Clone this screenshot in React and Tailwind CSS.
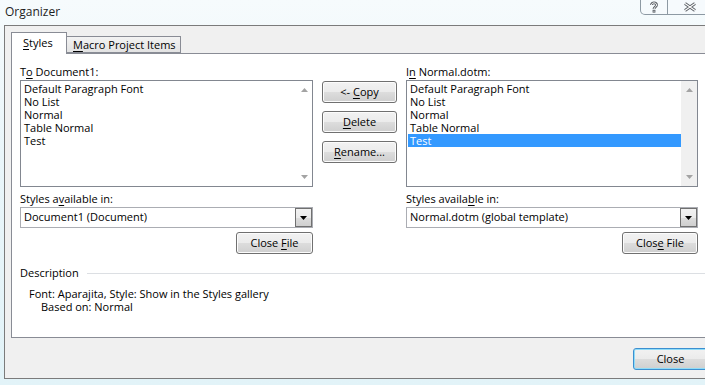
import React from 'react';

const btn =
  "h-[22px] flex items-center justify-center border border-[#707070] rounded-[3px] bg-[linear-gradient(to_bottom,#f2f2f2_0%,#ebebeb_50%,#dddddd_50%,#cfcfcf_100%)] shadow-[inset_0_0_0_1px_#fcfcfc] text-black";

function U({ children }) {
  return <span className="underline underline-offset-[2px]">{children}</span>;
}

function ListBox({ items, selected, grayBar }) {
  return (
    <div className="h-[107px] border border-[#828790] bg-white flex">
      <div className="flex-1 pt-[1px] pl-[1px]">
        {items.map((it) => (
          <div
            key={it}
            className={
              "h-[13px] leading-[13px] pl-[2px] whitespace-nowrap " +
              (it === selected ? "bg-[#3399ff] text-white" : "text-black")
            }
          >
            {it}
          </div>
        ))}
      </div>
      <div
        className={
          "w-[16px] flex flex-col justify-between items-center py-[7px] " +
          (grayBar ? "bg-[#f0f0f0]" : "bg-white")
        }
      >
        <svg width="7" height="4" viewBox="0 0 7 4">
          <path d="M0 4 L3.5 0 L7 4 Z" fill="#a3a3a3" />
        </svg>
        <svg width="7" height="4" viewBox="0 0 7 4">
          <path d="M0 0 L3.5 4 L7 0 Z" fill="#a3a3a3" />
        </svg>
      </div>
    </div>
  );
}

function Combo({ value }) {
  return (
    <div className="h-[21px] border border-[#abadb3] bg-white flex items-center">
      <span className="flex-1 pl-[3px] whitespace-nowrap">{value}</span>
      <div className="w-[17px] h-full border border-[#707070] bg-[linear-gradient(to_bottom,#f2f2f2_0%,#ebebeb_50%,#dddddd_50%,#cfcfcf_100%)] flex items-center justify-center">
        <svg width="7" height="4" viewBox="0 0 7 4">
          <path d="M0 0 L3.5 4 L7 0 Z" fill="#000" />
        </svg>
      </div>
    </div>
  );
}

const styles = ["Default Paragraph Font", "No List", "Normal", "Table Normal", "Test"];

export default function App() {
  return (
    <div className="w-[705px] h-[385px] overflow-hidden bg-[linear-gradient(to_bottom,#f6fbfd_0%,#eaf6fa_40%,#e2f3f8_100%)] font-['Open_Sans',sans-serif] text-[11px] text-black">
      <div className="w-[716px]">
        {/* title bar */}
        <div className="h-[25px] flex items-start">
          <span className="pl-[5px] pt-[4px] text-[12px] leading-[16px] text-[#1e1e1e]">Organizer</span>
          <div className="ml-auto mr-[4px] flex">
            <div className="w-[28px] h-[15px] border border-t-0 border-[#8d99a3] rounded-bl-[5px] bg-[#f7fafc]/70 flex items-center justify-center">
              <svg width="10" height="12" viewBox="0 0 10 12">
                <path d="M2.5 4 C2.5 1.2 7.5 1.2 7.5 4 C7.5 6 5 6 5 8" fill="none" stroke="#5a5f66" strokeWidth="2.8" />
                <path d="M2.5 4 C2.5 1.2 7.5 1.2 7.5 4 C7.5 6 5 6 5 8" fill="none" stroke="#fff" strokeWidth="1" />
                <rect x="3.6" y="8.8" width="2.8" height="2.8" fill="#5a5f66" />
                <rect x="4.5" y="9.7" width="1" height="1" fill="#fff" />
              </svg>
            </div>
            <div className="w-[44px] h-[15px] border border-t-0 border-l-0 border-[#8d99a3] bg-[#f7fafc]/70 flex items-center justify-center">
              <svg width="14" height="10" viewBox="0 0 14 10">
                <path d="M2 1.5 L12 8.5 M12 1.5 L2 8.5" stroke="#5a5f66" strokeWidth="3" />
                <path d="M2 1.5 L12 8.5 M12 1.5 L2 8.5" stroke="#fff" strokeWidth="1.1" />
              </svg>
            </div>
          </div>
        </div>

        {/* client area */}
        <div className="ml-[4px] h-[354px] border-l border-t border-b border-[#7b7b7b] bg-[#f0f0f0] pt-[7px] pl-[6px]">
          {/* tabs */}
          <div className="flex items-end h-[20px]">
            <div className="relative z-10 w-[56px] h-[22px] -mb-[1px] border border-b-0 border-[#898c95] bg-white pl-[11px] leading-[20px]">
              <U>S</U>tyles
            </div>
            <div className="w-[114px] h-[17px] border border-l-0 border-[#898c95] bg-[linear-gradient(to_bottom,#f3f3f3,#e3e3e3)] pl-[6px] leading-[16px] whitespace-nowrap">
              <U>M</U>acro Project Items
            </div>
          </div>

          {/* panel */}
          <div className="w-[720px] h-[285px] border border-[#898c95] bg-white pl-[8px] pt-[10px]">
            <div className="flex">
              <div className="w-[293px] flex flex-col">
                <div className="h-[16px] leading-[16px]">
                  T<U>o</U> Document1:
                </div>
                <ListBox items={styles} />
                <div className="mt-[4px] h-[16px] leading-[16px]">
                  Styles a<U>v</U>ailable in:
                </div>
                <Combo value="Document1 (Document)" />
                <div className={btn + " mt-[4px] ml-auto w-[77px]"}>
                  <span>Close <U>F</U>ile</span>
                </div>
              </div>

              <div className="ml-[9px] w-[75px] pt-[17px] flex flex-col gap-[8px]">
                <div className={btn}>
                  <span>&lt;- <U>C</U>opy</span>
                </div>
                <div className={btn}>
                  <span><U>D</U>elete</span>
                </div>
                <div className={btn}>
                  <span><U>R</U>ename...</span>
                </div>
              </div>

              <div className="ml-[9px] w-[292px] flex flex-col">
                <div className="h-[16px] leading-[16px]">
                  I<U>n</U> Normal.dotm:
                </div>
                <ListBox items={styles} selected="Test" grayBar />
                <div className="mt-[4px] h-[16px] leading-[16px]">
                  Styles availa<U>b</U>le in:
                </div>
                <Combo value="Normal.dotm (global template)" />
                <div className={btn + " mt-[4px] ml-auto w-[76px]"}>
                  <span>Clos<U>e</U> File</span>
                </div>
              </div>
            </div>

            <div className="mt-[11px] h-[16px] flex items-center">
              <span className="leading-[16px]">Description</span>
              <div className="flex-1 h-px bg-[#dcdfe3] ml-[8px]" />
            </div>
            <div className="mt-[6px] ml-[9px] leading-[13px]">
              Font: Aparajita, Style: Show in the Styles gallery
            </div>
            <div className="ml-[21px] leading-[13px]">Based on: Normal</div>
          </div>

          {/* footer */}
          <div className="mt-[10px] ml-[622px] w-[75px] h-[22px] flex items-center justify-center border border-[#3c8fd0] rounded-[3px] bg-[linear-gradient(to_bottom,#f2f2f2_0%,#ebebeb_50%,#dddddd_50%,#cfcfcf_100%)] shadow-[inset_0_0_0_1px_#8fdcf8]">
            Close
          </div>
        </div>
      </div>
    </div>
  );
}
